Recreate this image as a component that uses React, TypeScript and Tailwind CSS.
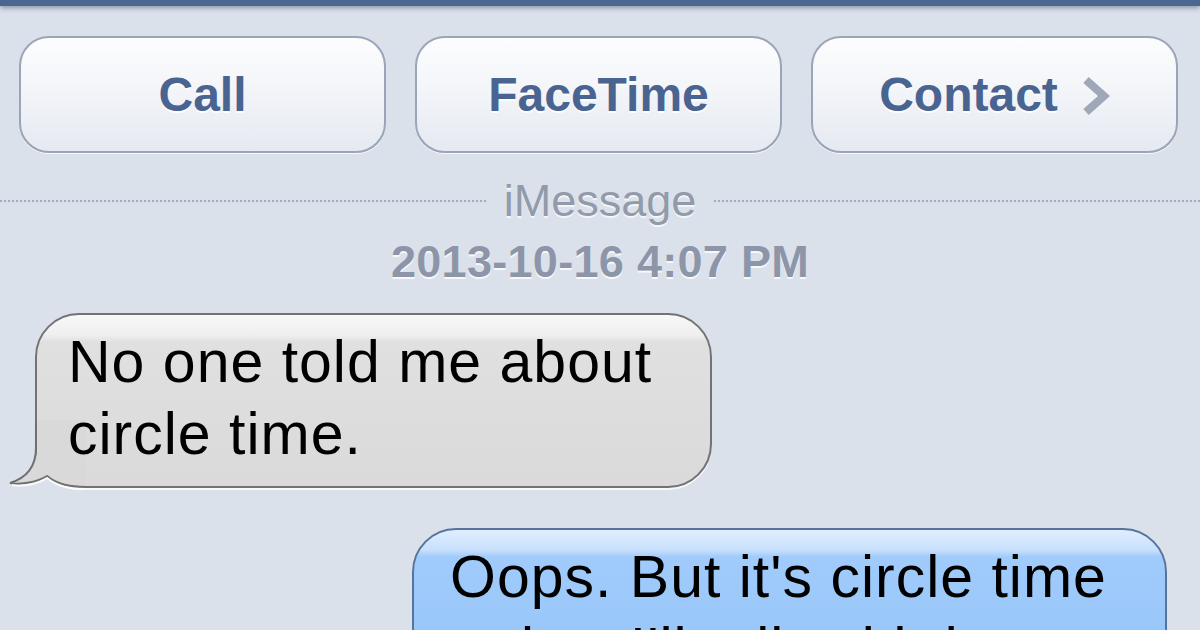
import React from 'react';

const font = { fontFamily: '"Liberation Sans", Arial, Helvetica, sans-serif' };

const ActionButton: React.FC<{ label: string; chevron?: boolean }> = ({ label, chevron }) => (
  <div className="h-[117px] rounded-[30px] border-2 border-[#9aa5b7] bg-[linear-gradient(to_bottom,#fdfdfe_0%,#f3f5f9_45%,#e5e9f1_100%)] shadow-[0_1px_0_rgba(255,255,255,0.8)] flex items-center justify-center gap-[22px]">
    <span className="text-[48px] font-bold text-[#4a6491] leading-none [text-shadow:0_2px_0_rgba(255,255,255,0.9)]">
      {label}
    </span>
    {chevron && (
      <svg width="30" height="42" viewBox="0 0 30 42" className="mt-[2px]">
        <polyline points="6,5 24,21 6,37" fill="none" stroke="#9ea8b8" strokeWidth="8" strokeLinejoin="miter" />
      </svg>
    )}
  </div>
);

export default function App() {
  return (
    <div className="w-[1200px] h-[630px] overflow-hidden bg-[#dbe1eb] relative" style={font}>
      <div className="h-[6px] bg-[#4b6691] shadow-[0_2px_5px_rgba(40,50,70,0.45)]" />

      <div className="grid grid-cols-3 gap-[29px] pl-[19px] pr-[22px] mt-[30px]">
        <ActionButton label="Call" />
        <ActionButton label="FaceTime" />
        <ActionButton label="Contact" chevron />
      </div>

      <div className="mt-[28px] h-[40px] flex items-center gap-[18px]">
        <div className="flex-1 border-t-2 border-dotted border-[#a2abba]" />
        <span className="text-[45px] leading-[40px] text-[#929baa] [text-shadow:0_2px_0_rgba(255,255,255,0.7)]">iMessage</span>
        <div className="flex-1 border-t-2 border-dotted border-[#a2abba]" />
      </div>

      <div className="mt-[21px] h-[40px] text-center text-[45px] leading-[40px] font-bold tracking-[0.3px] text-[#8c96a8] [text-shadow:0_2px_0_rgba(255,255,255,0.8)]">
        2013-10-16 4:07 PM
      </div>

      <div className="mt-[31px] ml-[35px] relative w-[677px]">
        <svg width="90" height="80" viewBox="0 0 90 80" className="absolute left-[-35px] top-[107px]">
          <path d="M37 0 L37 28 C37 48 27 58 10 63 C22 65 37 62 47 56 C57 63 68 66 86 66 L86 0 Z" fill="#d9d9d9" />
          <path d="M36 0 L36 28 C36 48 26 58 10 63 C22 65 37 62 47 56 C57 64 68 67 86 67" fill="none" stroke="#707070" strokeWidth="2" />
          <path d="M12 65 C24 67 38 64 47 58 C57 66 68 69 86 69" fill="none" stroke="rgba(255,255,255,0.8)" strokeWidth="2" />
        </svg>
        <div className="rounded-[44px] border-2 border-[#737373] bg-[linear-gradient(to_bottom,#f8f8f8_0px,#efefef_20px,#e0e0e0_27px,#dadada_100%)] shadow-[0_2px_0_rgba(255,255,255,0.8)] pl-[31px] pt-[11px] pb-[16px]">
          <div className="relative text-[59px] leading-[72px] tracking-[1px] text-black">
            No one told me about
            <br />
            circle time.
          </div>
        </div>
      </div>

      <div className="mt-[40px] flex justify-end pr-[33px]">
        <div className="w-[755px] rounded-[44px] border-2 border-[#56749c] bg-[linear-gradient(to_bottom,#e0eefe_0px,#c8e0fc_20px,#a0cbfb_27px,#94c3fa_100%)] pl-[36px] pt-[11px] pb-[16px]">
          <div className="text-[59px] leading-[72px] tracking-[1px] text-black">
            Oops. But it's circle time
            <br />
            today. I'll talk with her.
          </div>
        </div>
      </div>
    </div>
  );
}
